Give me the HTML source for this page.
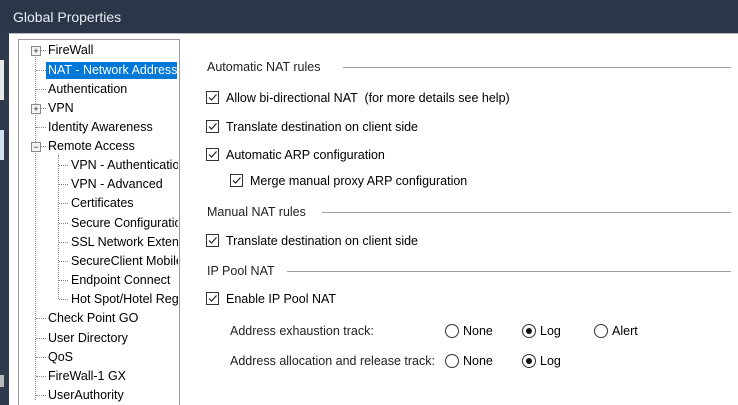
<!DOCTYPE html>
<html style="overflow:hidden;height:405px"><head><style>
body{margin:0;width:738px;height:405px;overflow:hidden;background:#fff;font-family:"Liberation Sans",sans-serif;font-size:12.5px;color:#000;position:relative}
.a{position:absolute;white-space:nowrap}
.t{position:absolute;line-height:16px;white-space:nowrap}
.cb{position:absolute;width:11px;height:11px;border:1px solid #333;background:#fff}
.cb svg{position:absolute;left:0;top:0}
.rd{position:absolute;width:12px;height:12px;border:1px solid #333;border-radius:50%;background:#fff}
.rd.on::after{content:"";position:absolute;left:3px;top:3px;width:6px;height:6px;border-radius:50%;background:#111}
.hl{position:absolute;height:1px;background:#a0a0a0}
.pb{position:absolute;width:8px;height:8px;border:1px solid #8a8a8a;background:#f4f4f4;font-size:9px;line-height:8px;text-align:center;color:#222}
.dh{position:absolute;height:0;border-top:1px dotted #888}
.dv{position:absolute;width:0;border-left:1px dotted #888}
</style></head><body>
<div class="a" style="left:0;top:0;width:738px;height:33px;background:#2b3648"></div>
<div class="a" style="left:13px;top:9px;color:#e8ecf2;font-size:14px">Global Properties</div>
<div class="a" style="left:0;top:33px;width:9px;height:372px;background:#2f3a4c"></div>
<div class="a" style="left:0;top:60px;width:4px;height:40px;background:#e8e8e8"></div>
<div class="a" style="left:0;top:130px;width:4px;height:30px;background:#cfe0ee"></div>
<div class="a" style="left:0;top:375px;width:4px;height:12px;background:#bbb"></div>
<div class="a" style="left:9px;top:33px;width:729px;height:1px;background:#bbb"></div>
<div class="a" style="left:18px;top:39px;width:160px;height:366px;border:1px solid #9a9a9a;border-bottom:none;background:#fff"></div>
<div class="dv" style="left:35px;top:50px;height:350px"></div>
<div class="dv" style="left:58px;top:155px;height:144px"></div>
<div class="a" style="left:46px;top:62px;width:131px;height:17px;background:#0078d7"></div>
<div class="pb" style="left:31px;top:46px">+</div>
<div class="pb" style="left:31px;top:104px">+</div>
<div class="pb" style="left:31px;top:142px">−</div>
<div class="dh" style="left:41px;top:50px;width:5px"></div>
<div class="dh" style="left:36px;top:70px;width:10px"></div>
<div class="dh" style="left:36px;top:89px;width:10px"></div>
<div class="dh" style="left:41px;top:108px;width:5px"></div>
<div class="dh" style="left:36px;top:127px;width:10px"></div>
<div class="dh" style="left:41px;top:146px;width:5px"></div>
<div class="dh" style="left:59px;top:165px;width:9px"></div>
<div class="dh" style="left:59px;top:184px;width:9px"></div>
<div class="dh" style="left:59px;top:203px;width:9px"></div>
<div class="dh" style="left:59px;top:223px;width:9px"></div>
<div class="dh" style="left:59px;top:242px;width:9px"></div>
<div class="dh" style="left:59px;top:261px;width:9px"></div>
<div class="dh" style="left:59px;top:280px;width:9px"></div>
<div class="dh" style="left:59px;top:299px;width:9px"></div>
<div class="dh" style="left:36px;top:318px;width:10px"></div>
<div class="dh" style="left:36px;top:338px;width:10px"></div>
<div class="dh" style="left:36px;top:357px;width:10px"></div>
<div class="dh" style="left:36px;top:376px;width:10px"></div>
<div class="dh" style="left:36px;top:395px;width:10px"></div>
<div style="position:absolute;left:18px;top:39px;width:160px;height:366px;overflow:hidden">
<div class="t" style="left:30px;top:3px">FireWall</div>
<div class="t" style="left:30px;top:23px;color:#fff">NAT - Network Address Translation</div>
<div class="t" style="left:30px;top:42px">Authentication</div>
<div class="t" style="left:30px;top:61px">VPN</div>
<div class="t" style="left:30px;top:80px">Identity Awareness</div>
<div class="t" style="left:30px;top:99px">Remote Access</div>
<div class="t" style="left:53px;top:118px">VPN - Authentication</div>
<div class="t" style="left:53px;top:137px">VPN - Advanced</div>
<div class="t" style="left:53px;top:156px">Certificates</div>
<div class="t" style="left:53px;top:176px">Secure Configuration</div>
<div class="t" style="left:53px;top:195px">SSL Network Extender</div>
<div class="t" style="left:53px;top:214px">SecureClient Mobile</div>
<div class="t" style="left:53px;top:233px">Endpoint Connect</div>
<div class="t" style="left:53px;top:252px">Hot Spot/Hotel Registration</div>
<div class="t" style="left:30px;top:271px">Check Point GO</div>
<div class="t" style="left:30px;top:291px">User Directory</div>
<div class="t" style="left:30px;top:310px">QoS</div>
<div class="t" style="left:30px;top:329px">FireWall-1 GX</div>
<div class="t" style="left:30px;top:348px">UserAuthority</div>
</div>

<div class="t" style="left:207px;top:59px;color:#222">Automatic NAT rules</div>
<div class="hl" style="left:343px;top:67px;width:388px"></div>
<div class="t" style="left:207px;top:204px;color:#222">Manual NAT rules</div>
<div class="hl" style="left:322px;top:212px;width:409px"></div>
<div class="t" style="left:207px;top:263px;color:#222">IP Pool NAT</div>
<div class="hl" style="left:287px;top:271px;width:444px"></div>

<div class="cb" style="left:206px;top:91px"><svg width="11" height="11"><path d="M2 5.5 L4.5 8 L9.5 2.5" stroke="#222" stroke-width="1.2" fill="none"/></svg></div>
<div class="t" style="left:226px;top:90px">Allow bi-directional NAT &nbsp;(for more details see help)</div>
<div class="cb" style="left:206px;top:120px"><svg width="11" height="11"><path d="M2 5.5 L4.5 8 L9.5 2.5" stroke="#222" stroke-width="1.2" fill="none"/></svg></div>
<div class="t" style="left:226px;top:119px">Translate destination on client side</div>
<div class="cb" style="left:206px;top:148px"><svg width="11" height="11"><path d="M2 5.5 L4.5 8 L9.5 2.5" stroke="#222" stroke-width="1.2" fill="none"/></svg></div>
<div class="t" style="left:226px;top:147px">Automatic ARP configuration</div>
<div class="cb" style="left:230px;top:174px"><svg width="11" height="11"><path d="M2 5.5 L4.5 8 L9.5 2.5" stroke="#222" stroke-width="1.2" fill="none"/></svg></div>
<div class="t" style="left:250px;top:173px">Merge manual proxy ARP configuration</div>
<div class="cb" style="left:206px;top:234px"><svg width="11" height="11"><path d="M2 5.5 L4.5 8 L9.5 2.5" stroke="#222" stroke-width="1.2" fill="none"/></svg></div>
<div class="t" style="left:226px;top:233px">Translate destination on client side</div>
<div class="cb" style="left:206px;top:292px"><svg width="11" height="11"><path d="M2 5.5 L4.5 8 L9.5 2.5" stroke="#222" stroke-width="1.2" fill="none"/></svg></div>
<div class="t" style="left:226px;top:291px">Enable IP Pool NAT</div>

<div class="t" style="left:230px;top:323px;color:#222">Address exhaustion track:</div>
<div class="rd" style="left:445px;top:324px"></div><div class="t" style="left:463px;top:323px">None</div>
<div class="rd on" style="left:522px;top:324px"></div><div class="t" style="left:540px;top:323px">Log</div>
<div class="rd" style="left:594px;top:324px"></div><div class="t" style="left:612px;top:323px">Alert</div>
<div class="t" style="left:230px;top:353px;color:#222">Address allocation and release track:</div>
<div class="rd" style="left:445px;top:354px"></div><div class="t" style="left:463px;top:353px">None</div>
<div class="rd on" style="left:522px;top:354px"></div><div class="t" style="left:540px;top:353px">Log</div>
</body></html>
